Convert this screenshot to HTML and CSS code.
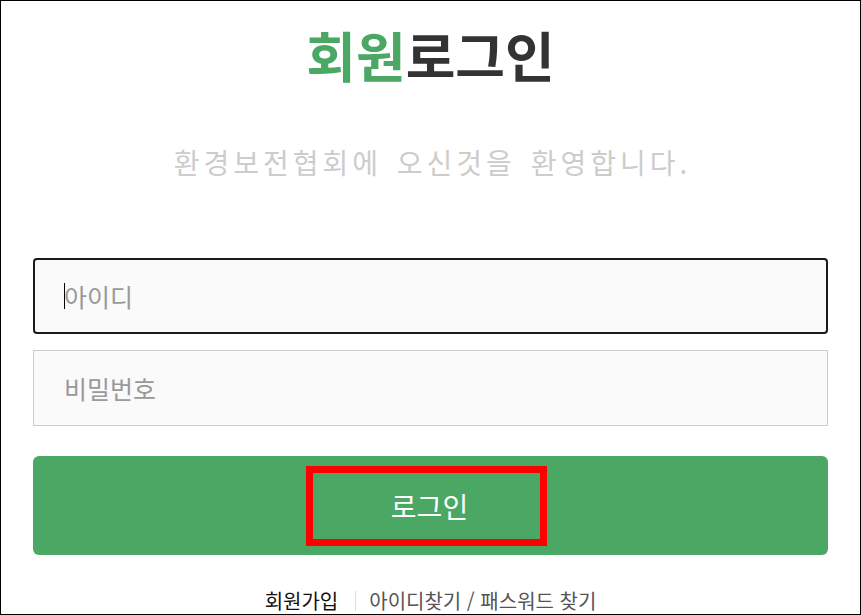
FILE: index.html
```html
<!DOCTYPE html>
<html lang="ko">
<head>
<meta charset="utf-8">
<title>회원로그인</title>
<link rel="stylesheet" href="styles.css">
</head>
<body>
<div class="frame">
  <main class="login">
    <h1 class="login-title"><span class="accent">회원</span>로그인</h1>
    <p class="login-sub">환경보전협회에 오신것을 환영합니다.</p>
    <form class="login-form">
      <div class="field field-focused">
        <input class="field-input" type="text" placeholder="아이디">
      </div>
      <div class="field">
        <input class="field-input" type="password" placeholder="비밀번호">
      </div>
      <div class="submit-bar">
        <button class="submit-btn" type="button">로그인</button>
      </div>
    </form>
    <nav class="login-links">
      <a class="link link-strong" href="#">회원가입</a>
      <span class="sep"></span>
      <a class="link" href="#">아이디찾기 / 패스워드 찾기</a>
    </nav>
  </main>
</div>
</body>
</html>
```
FILE: styles.css
```css
* { box-sizing: border-box; }
html, body { margin: 0; padding: 0; background: #fff; }
body {
  font-family: "Noto Sans CJK KR", "Noto Sans", sans-serif;
}
.frame {
  width: 861px;
  height: 615px;
  border: 1px solid #000;
  overflow: hidden;
  background: #fff;
}
.login {
  padding: 22px 32px 0;
  display: flex;
  flex-direction: column;
}
.login-title {
  margin: 0;
  text-align: center;
  font-size: 54px;
  line-height: 64px;
  font-weight: 700;
  color: #333;
  letter-spacing: 0;
}
.accent { color: #4aa764; }
.login-sub {
  margin: 55px 0 0;
  padding-left: 4px;
  text-align: center;
  font-size: 28px;
  line-height: 40px;
  color: #cccccc;
  letter-spacing: 4px;
  word-spacing: 3px;
}
.login-form {
  margin-top: 76px;
  display: flex;
  flex-direction: column;
}
.field {
  position: relative;
  height: 76px;
}
.field + .field { margin-top: 16px; }
.field-input {
  width: 100%;
  height: 100%;
  margin: 0;
  padding: 0 0 0 30px;
  border: 1px solid #cccccc;
  background: #fafafa;
  font-family: "Noto Sans CJK KR", "Noto Sans", sans-serif;
  font-size: 25px;
  color: #333;
  outline: none;
}
.field-input::placeholder { color: #999; }
.field-focused .field-input {
  border: 2px solid #1a1a1a;
  border-radius: 4px;
  padding-left: 29px;
}
.field-focused::before {
  content: "";
  position: absolute;
  left: 31px;
  top: 25px;
  width: 1px;
  height: 26px;
  background: #000;
}
.submit-bar {
  margin-top: 30px;
  height: 99px;
  background: #4aa764;
  border-radius: 6px;
  display: flex;
  align-items: center;
  justify-content: center;
  padding-right: 8px;
}
.submit-btn {
  width: 241px;
  height: 80px;
  border: 7px solid #ff0000;
  background: transparent;
  color: #fff;
  font-family: "Noto Sans CJK KR", "Noto Sans", sans-serif;
  font-size: 28px;
  padding: 0 0 0 6px;
  cursor: pointer;
}
.login-links {
  margin-top: 33px;
  display: flex;
  justify-content: center;
  align-items: center;
  font-size: 20px;
  line-height: 26px;
}
.link { text-decoration: none; color: #555; }
.link-strong { color: #111; }
.sep {
  width: 1px;
  height: 20px;
  background: #ddd;
  margin: 0 13px 0 17px;
}
```
